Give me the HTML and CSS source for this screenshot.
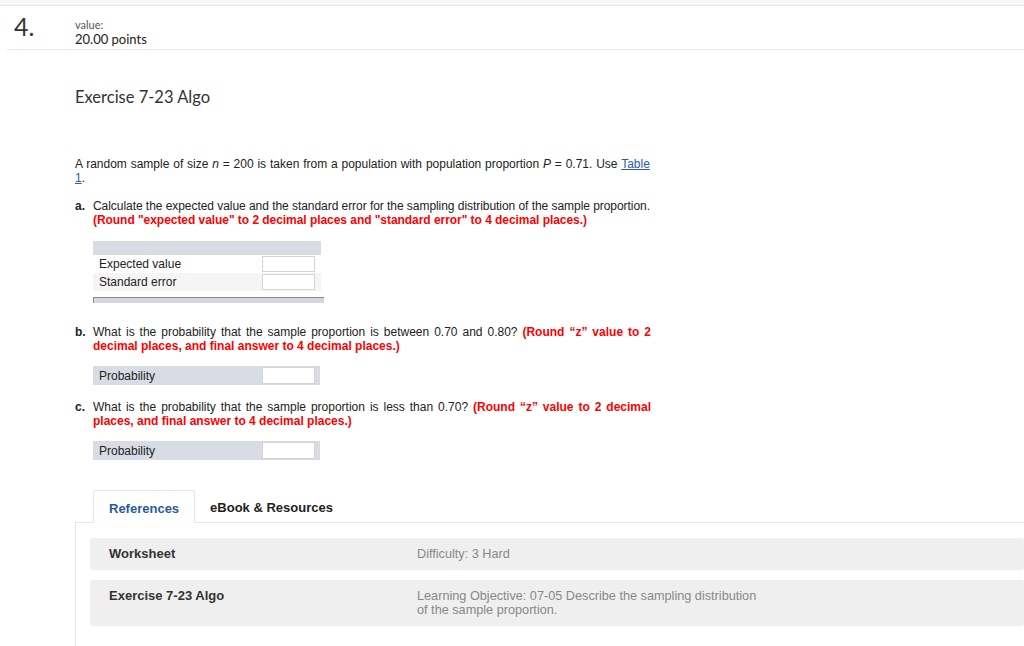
FILE: index.html
```html
<!DOCTYPE html>
<html lang="en">
<head>
  <meta charset="UTF-8" />
  <title>Exercise 7-23 Algo</title>
  <link rel="stylesheet" href="styles.css">
</head>
<body>
  <div class="top-strip"></div>
  <div class="q-head">
    <div class="q-num">4.</div>
    <div class="q-value">
      <div class="q-label">value:</div>
      <div class="q-points">20.00 points</div>
    </div>
  </div>

  <main class="q-body">
    <h2 class="q-title">Exercise 7-23 Algo</h2>

    <p class="intro">A random sample of size <i>n</i> = 200 is taken from a population with population proportion <i>P</i> = 0.71. Use <a href="#">Table 1</a>.</p>

    <div class="part">
      <span class="part-letter">a.</span>
      <div class="part-text tight">Calculate the expected value and the standard error for the sampling distribution of the sample proportion.<br><b class="hint">(Round "expected value" to 2 decimal places and "standard error" to 4 decimal places.)</b></div>
    </div>
    <div class="ans-table">
      <div class="ans-head"></div>
      <div class="ans-row"><span>Expected value</span><input type="text"></div>
      <div class="ans-row alt"><span>Standard error</span><input type="text"></div>
      <div class="ans-foot"></div>
    </div>

    <div class="part">
      <span class="part-letter">b.</span>
      <div class="part-text">What is the probability that the sample proportion is between 0.70 and 0.80? <b class="hint">(Round “z” value to 2 decimal places, and final answer to 4 decimal places.)</b></div>
    </div>
    <div class="prob-row"><span>Probability</span><input type="text"></div>

    <div class="part">
      <span class="part-letter">c.</span>
      <div class="part-text">What is the probability that the sample proportion is less than 0.70? <b class="hint">(Round “z” value to 2 decimal places, and final answer to 4 decimal places.)</b></div>
    </div>
    <div class="prob-row"><span>Probability</span><input type="text"></div>

    <div class="tabs">
      <div class="tab active">References</div>
      <div class="tab">eBook &amp; Resources</div>
    </div>
    <div class="tab-panel">
      <div class="ref-row">
        <div class="ref-name">Worksheet</div>
        <div class="ref-info">Difficulty: 3 Hard</div>
      </div>
      <div class="ref-row">
        <div class="ref-name">Exercise 7-23 Algo</div>
        <div class="ref-info">Learning Objective: 07-05 Describe the sampling distribution<br>of the sample proportion.</div>
      </div>
    </div>
  </main>
</body>
</html>
```

FILE: styles.css
```css
/* Base */
body { margin:0; font-family:"Liberation Sans", Arial, sans-serif; color:#222; background:#fff; overflow:hidden; }
a { color:#2a5caa; }
/* Question header */
.top-strip { height:5px; background:#f7f7f7; border-bottom:1px solid #e6e6e6; }
.q-head { display:flex; margin-left:7px; height:43px; border-bottom:1px solid #e6e6e6; font-family:Lato, "Open Sans", sans-serif; }
.q-num { width:68px; padding-left:7px; padding-top:7px; font-size:25px; line-height:26px; color:#333; box-sizing:border-box; }
.q-value { padding-top:13px; }
.q-label { font-size:11px; color:#555; line-height:12px; }
.q-points { font-size:13px; color:#222; line-height:16px; }
/* Body */
.q-body { padding-left:75px; }
.q-title { margin:37px 0 0; font-family:Lato, "Open Sans", sans-serif; font-weight:400; font-size:16.5px; color:#333; line-height:20px; }
.intro { width:580px; margin:50px 0 0; font-size:12px; line-height:14px; color:#222; word-spacing:0.5px; }
.part { display:flex; width:576px; margin-top:14px; font-size:12px; line-height:14px; }
.part-letter { width:18px; flex:none; font-weight:bold; }
.part-text { text-align:justify; }
.part-text.tight { text-align:left; white-space:nowrap; letter-spacing:-0.05px; }
.hint { color:#f00; }
/* Answer tables */
.ans-table { margin:14px 0 0 18px; width:231px; font-size:12px; }
.ans-head { height:14px; background:#d9dce5; width:228px; }
.ans-row { display:flex; justify-content:space-between; align-items:center; height:18px; padding:0 6px; width:216px; background:#fff; }
.ans-row.alt { background:#f5f5f5; }
.ans-row input, .prob-row input { width:51px; height:14px; border:1px solid #d4d4d4; padding:0; margin:0; background:#fff; }
.ans-foot { margin-top:6px; height:5px; background:#d4d7de; border-top:1px solid #8a8a8a; border-left:1px solid #8a8a8a; }
.ans-table + .part { margin-top:22px; }
.prob-row { display:flex; align-items:center; margin:13px 0 0 18px; width:227px; height:19px; font-size:12px; background:#d9dce5; }
.prob-row span { width:163px; padding-left:6px; }
.prob-row input { height:15px; margin-right:5px; }
.prob-row + .part { margin-top:15px; }
/* Tabs */
.tabs { display:flex; margin:30px 0 0 18px; font-size:13px; font-weight:bold; }
.tab { padding:10px 15px 6px; height:15px; color:#222; }
.tab.active { color:#2b5a9b; border:1px solid #e6e6e6; border-bottom:1px solid #fff; border-radius:3px 3px 0 0; margin-bottom:-1px; background:#fff; position:relative; }
.tab-panel { border-top:1px solid #e6e6e6; border-left:1px solid #e6e6e6; padding:15px 0 20px 14px; }
.ref-row { display:flex; background:#efefef; border-radius:3px; padding:9px 0; margin-bottom:10px; font-size:12.7px; line-height:14px; }
.ref-name { width:308px; padding-left:19px; font-weight:bold; font-size:13px; color:#333; }
.ref-info { color:#888; }
```
